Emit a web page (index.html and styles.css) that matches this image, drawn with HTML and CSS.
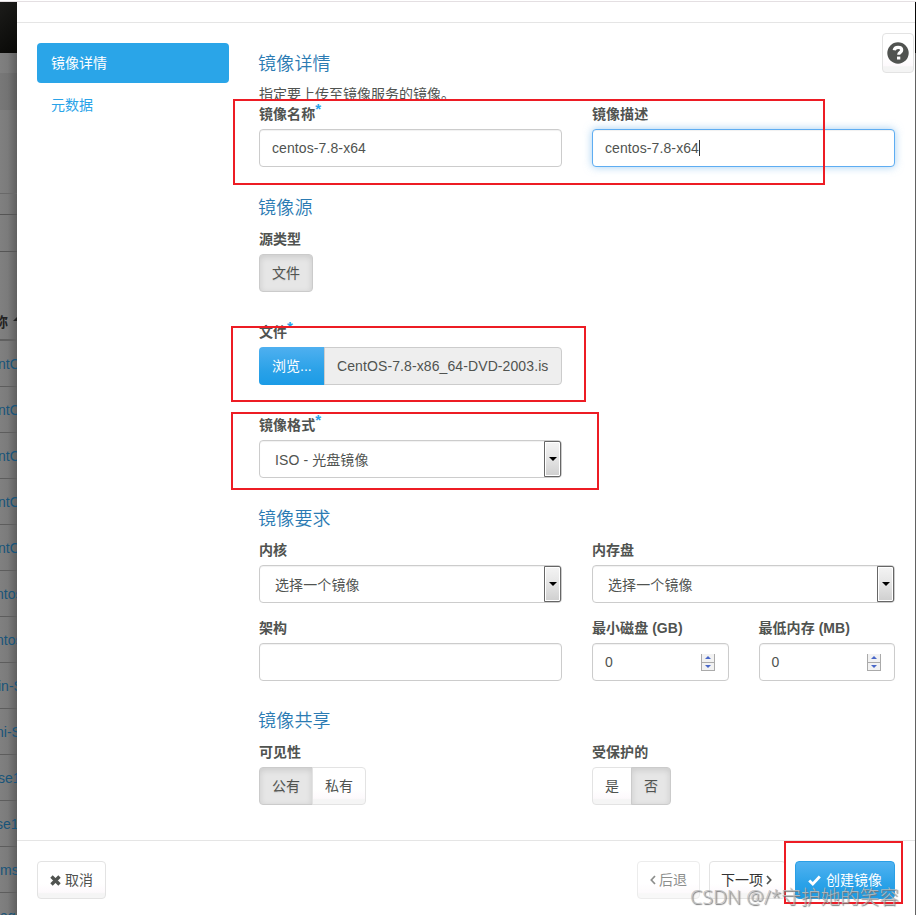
FILE: index.html
```html
<!DOCTYPE html>
<html lang="zh-CN">
<head>
<meta charset="utf-8">
<title>创建镜像</title>
<link rel="stylesheet" href="styles.css">
</head>
<body>
<div class="page">
  <div class="backdrop">
    <div class="navbar"></div>
    <div class="crumb"></div>
    <div class="tools"><div class="tool t1"></div><div class="tool t2"></div><div class="tool t3"></div></div>
    <div class="thead">称 <svg width="10" height="5" viewBox="0 0 10 5"><path d="M0 5 5 0l5 5z" fill="#222"/></svg></div>
    <div class="trow"><span class="n1">ntOS</span></div>
    <div class="trow"><span class="n1">ntOS</span></div>
    <div class="trow"><span class="n1">ntOS</span></div>
    <div class="trow"><span class="n1">ntOS</span></div>
    <div class="trow"><span class="n1">ntOS</span></div>
    <div class="trow"><span class="n3">ntos</span></div>
    <div class="trow"><span class="n3">ntos</span></div>
    <div class="trow"><span class="n2">in-S</span></div>
    <div class="trow"><span class="n3">ni-S</span></div>
    <div class="trow"><span class="n2">se1</span></div>
    <div class="trow"><span class="n3">se1</span></div>
    <div class="trow"><span>ms</span></div>
    <div class="trow"><span>ag</span></div>
  </div>

  <div class="modal">
    <div class="modal-header"></div>
    <div class="modal-body">
      <nav class="steps">
        <a class="step active">镜像详情</a>
        <a class="step">元数据</a>
      </nav>
      <form class="form">
        <h4 class="title first">镜像详情</h4>
        <p class="desc">指定要上传至镜像服务的镜像。</p>
        <div class="row">
          <div class="field"><label>镜像名称<i class="req">*</i></label><div class="input">centos-7.8-x64</div></div>
          <div class="field"><label>镜像描述</label><div class="input focus">centos-7.8-x64<span class="caret"></span></div></div>
        </div>

        <h4 class="title">镜像源</h4>
        <div class="row wide">
          <div class="field"><label>源类型</label><div class="group"><span class="btn on">文件</span></div></div>
        </div>
        <div class="row wide">
          <div class="field"><label>文件<i class="req">*</i></label>
            <div class="file"><span class="browse">浏览...</span><span class="filename">CentOS-7.8-x86_64-DVD-2003.is</span></div></div>
        </div>
        <div class="row">
          <div class="field"><label>镜像格式<i class="req">*</i></label>
            <div class="select"><span>ISO - 光盘镜像</span><b class="arrow"></b></div></div>
        </div>

        <h4 class="title">镜像要求</h4>
        <div class="row near">
          <div class="field"><label>内核</label><div class="select"><span>选择一个镜像</span><b class="arrow"></b></div></div>
          <div class="field"><label>内存盘</label><div class="select"><span>选择一个镜像</span><b class="arrow"></b></div></div>
        </div>
        <div class="row">
          <div class="field"><label>架构</label><div class="input"></div></div>
          <div class="pair">
            <div class="field"><label>最小磁盘 (GB)</label><div class="input number">0<span class="spin"><b class="up"></b><b class="down"></b></span></div></div>
            <div class="field"><label>最低内存 (MB)</label><div class="input number">0<span class="spin"><b class="up"></b><b class="down"></b></span></div></div>
          </div>
        </div>

        <h4 class="title last">镜像共享</h4>
        <div class="row">
          <div class="field"><label>可见性</label><div class="group"><span class="btn on">公有</span><span class="btn">私有</span></div></div>
          <div class="field"><label>受保护的</label><div class="group"><span class="btn">是</span><span class="btn on">否</span></div></div>
        </div>
      </form>
      <div class="help"><svg width="22" height="22" viewBox="0 0 22 22"><circle cx="11" cy="11" r="10.7" fill="#505350"/><path d="M7.2 8.3C7.500 6.200 9 5.400 11.100 5.400c2.300 0 3.600 1 3.600 2.700 0 2.400-3 2.200-3 4.700" fill="none" stroke="#fff" stroke-width="3.200"/><path d="M10 14.600h3.300v2.900H10z" fill="#fff"/></svg></div>
    </div>
    <div class="modal-footer">
      <span class="btn cancel"><svg width="11" height="11" viewBox="0 0 11 11"><path d="M1.500 1.500l8 8M9.500 1.500l-8 8" stroke="#505350" stroke-width="3.400"/></svg>取消</span>
      <span class="btn back"><svg width="6" height="10" viewBox="0 0 6 10"><path d="M5 1 1.300 5 5 9" fill="none" stroke="#505350" stroke-width="1.700"/></svg>后退</span>
      <span class="btn next">下一项<svg width="6" height="10" viewBox="0 0 6 10"><path d="M1 1l3.700 4L1 9" fill="none" stroke="#505350" stroke-width="1.700"/></svg></span>
      <span class="btn primary"><svg width="13" height="11" viewBox="0 0 13 11"><path d="M1.200 5.400 4.800 9l7-7.500" fill="none" stroke="#fff" stroke-width="2.800"/></svg>创建镜像</span>
    </div>
  </div>
  <div class="edge"></div>

  <div class="mark m1"></div>
  <div class="mark m2"></div>
  <div class="mark m3"></div>
  <div class="mark m4"></div>
  <div class="watermark">CSDN @/*守护她的笑容</div>
</div>
</body>
</html>
```
FILE: styles.css
```css
* { box-sizing: border-box; }
body { margin: 0; background: #fff; color: #505350; font: 14px/20px "Liberation Sans", "Noto Sans CJK SC", sans-serif; }
svg { display: block; flex: none; }

.page { position: relative; display: grid; grid-template-columns: 17px 898px 1px; height: 915px; padding-top: 1px; border: 0; overflow: hidden; background: linear-gradient(#e4dfe2, #e4dfe2) 0 1px / 100% 1px no-repeat; }

.backdrop { margin-top: 1px; height: 913px; overflow: hidden; display: flex; flex-direction: column; background: linear-gradient(90deg, #808080, #7b7b7b 45%, #606060); color: #185479; }
.navbar { flex: none; height: 51px; background: linear-gradient(135deg, #1c1c1a, #080806); }
.crumb { flex: none; margin-top: 20px; height: 37px; background: rgba(0, 0, 0, .06); }
.tools { flex: none; height: 142px; }
.tool { border-bottom: 1px solid #555; }
.t1 { height: 84px; border-color: #696969; }
.t2 { height: 21px; }
.t3 { height: 37px; }
.thead { flex: none; height: 89px; display: flex; align-items: flex-end; gap: 5px; padding-bottom: 7px; margin-left: -6px; border-bottom: 2px solid #606060; color: #222; font-weight: bold; white-space: nowrap; }
.thead svg { margin-bottom: 11px; }
.trow { flex: none; height: 46px; padding-top: 13px; border-bottom: 1px solid #5d5d5d; white-space: nowrap; }
.n1, .n2 { margin-left: -2px; }
.n3 { margin-left: -4px; }

.edge { margin-top: 1px; height: 913px; background: linear-gradient(#080808 51px, #626262 51px); }

.modal { margin-top: 1px; height: 913px; background: #fff; display: flex; flex-direction: column; }
.modal-header { flex: none; height: 21px; border-bottom: 1px solid #e5e5e5; }
.modal-body { flex: none; height: 817px; display: grid; grid-template-columns: 192px 636px 32px; column-gap: 30px; padding: 20px 0 0 20px; position: relative; }
.steps { display: flex; flex-direction: column; gap: 2px; }
.step { height: 40px; padding: 10px 14px; border-radius: 4px; color: #29a3e8; }
.step.active { background: #2aa5e8; color: #fff; }
.help { position: absolute; top: 10px; right: 1px; width: 32px; height: 40px; display: grid; place-items: center; border: 1px solid #e3e3e3; border-radius: 4px; background: linear-gradient(#fff 60%, #fdf9fc 84%, #f4f4f4 86%); }

.title { margin: 31px 0 11px -1px; color: #2b7bb3; font-size: 18px; line-height: 20px; font-weight: 350; letter-spacing: .2px; }
.title.first { margin: 11px 0 10px -1px; }
.title.last { margin: 30px 0 11px -1px; }
.desc { margin: 0; }
.row { display: grid; grid-template-columns: 303px 303px; gap: 30px; }
.row.wide { margin-bottom: 30px; }
.row.near { margin-bottom: 15px; }
.pair { display: grid; grid-template-columns: 1fr 1fr; gap: 30px; }
label { display: block; height: 20px; margin-bottom: 5px; font-weight: bold; white-space: nowrap; letter-spacing: .05px; }
.req { color: #29a3e8; font-style: normal; font-size: 15px; line-height: 10px; vertical-align: 5px; }
.input, .select { display: flex; align-items: center; height: 38px; padding: 0 12px; border: 1px solid #ccc; border-radius: 4px; background: #fff; box-shadow: inset 0 1px 1px rgba(0, 0, 0, .06); letter-spacing: .1px; }
.input.focus { border-color: #5eadf2; box-shadow: inset 0 1px 1px rgba(0, 0, 0, .06), 0 0 8px rgba(102, 175, 233, .6); }
.caret { width: 1px; height: 16px; background: #333; }
.select { justify-content: space-between; padding: 0 0 0 15px; }
.select span { padding-top: 2px; }
.arrow { width: 17px; height: 36px; display: grid; place-items: center; border: 1px solid #666; border-radius: 0 2px 2px 0; box-shadow: inset 0 0 0 1px #fff; background: linear-gradient(#f4f4f4, #e5e5e5 48%, #cfcfcf); }
.arrow::before { content: ""; border: 4px solid transparent; border-top-color: #000; border-bottom: 0; }
.number { justify-content: space-between; padding-right: 13px; }
.spin { width: 14px; height: 17px; display: grid; grid-template-rows: 8px 7px; gap: 1px; background: #aaa; border: solid #aaa; border-width: 0 1px 1px; }
.spin b { display: grid; place-items: center; background: #f2f2f2; }
.up::before, .down::before { content: ""; border: 3px solid transparent; }
.up::before { border-bottom-color: #4967c8; border-top: 0; }
.down::before { border-top-color: #4967c8; border-bottom: 0; }

.group { display: flex; }
.btn { height: 38px; display: flex; align-items: center; padding: 0 12px; border: 1px solid #e3e3e3; border-radius: 4px; background: linear-gradient(#fff 60%, #fdf9fc 84%, #f5f5f5 88%); white-space: nowrap; }
.btn.on { background: #e6e6e6; border-color: #cbcbcb; box-shadow: inset 0 2px 6px rgba(0, 0, 0, .12); text-shadow: 0 1px 1px #ccc; }
.group .btn:not(:last-child) { border-radius: 4px 0 0 4px; }
.group .btn + .btn { margin-left: -1px; border-radius: 0 4px 4px 0; }
.group .btn:only-child { border-radius: 4px; }
.file { display: flex; height: 38px; }
.browse { width: 66px; padding: 9px 0 9px 13px; border-radius: 4px 0 0 4px; background: linear-gradient(#4fb0f0, #2ba2e8 60%, #1b9be6); color: #fff; }
.filename { flex: 1; padding: 8px 12px; margin-left: -1px; border: 1px solid #ccc; border-radius: 0 4px 4px 0; background: #eee; white-space: nowrap; overflow: hidden; letter-spacing: .1px; }

.modal-footer { flex: 1; display: flex; align-items: flex-start; gap: 9px; padding: 20px 20px 0; border-top: 1px solid #e5e5e5; }
.cancel { width: 69px; gap: 4px; margin-right: auto; }
.back { width: 63px; gap: 3px; opacity: .65; }
.next { width: 77px; gap: 3px; padding-left: 11px; color: #333; }
.primary { width: 100px; gap: 5px; border-color: #2a9fe5; background: linear-gradient(#50b2f1, #2ba2e8 60%, #1b9be6); color: #fff; }

.mark { position: absolute; border: 2px solid #ed1c24; }
.m1 { left: 233px; top: 99px; width: 592px; height: 86px; }
.m2 { left: 231px; top: 326px; width: 355px; height: 76px; }
.m3 { left: 231px; top: 412px; width: 368px; height: 78px; }
.m4 { left: 784px; top: 841px; width: 119px; height: 63px; }
.watermark { position: absolute; left: 690px; top: 886px; color: rgba(190, 190, 190, .85); font: 19.6px/22px "Noto Sans", "Noto Sans CJK SC", sans-serif; font-weight: 300; white-space: nowrap; text-shadow: 1px 1px 1px #777; }
```
